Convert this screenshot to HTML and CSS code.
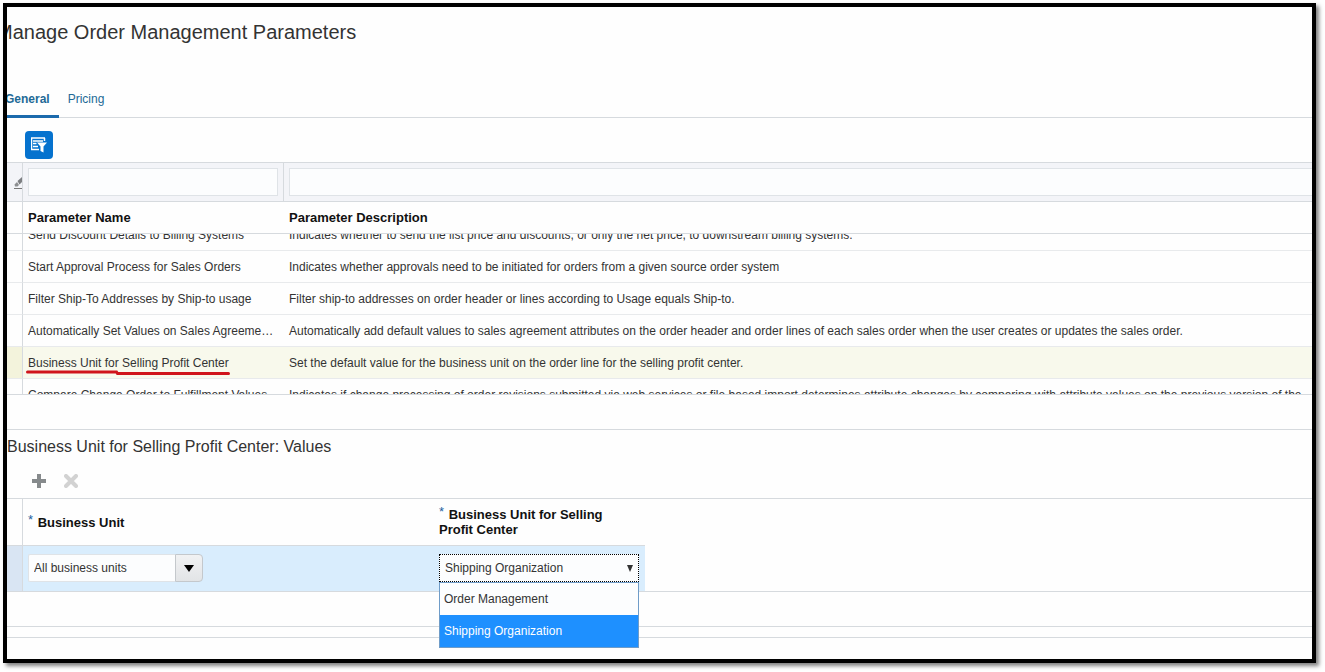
FILE: index.html
```html
<!DOCTYPE html>
<html lang="en">
<head>
    <meta charset="UTF-8">
    <meta name="viewport" content="width=device-width, initial-scale=1.0">
    <title>Manage Order Management Parameters</title>
    <link rel="stylesheet" href="styles.css">
</head>
<body>
    <main class="frame">
        <h1 class="page-title">Manage Order Management Parameters</h1>

        <nav class="tabs">
            <a href="#general" class="tab active">General</a>
            <a href="#pricing" class="tab">Pricing</a>
        </nav>

        <section id="general">
            <div class="toolbar">
                <button type="button" class="filter-btn" aria-label="Query by example">
                    <svg width="16" height="16" viewBox="0 0 16 16">
                        <path d="M0 1h14M0.500 1v12M13.500 1v3M0 12.500h8" fill="none" stroke="#fff" stroke-width="1.500"/>
                        <path d="M2 4h10M2 6.500h3.500M2 9.500h5" stroke="#fff" stroke-width="1.500"/>
                        <path d="M6 5.500h10L12.500 9.500v6L9.500 14V9.500z" fill="#fff"/>
                    </svg>
                </button>
            </div>

            <table class="grid params-head">
                <colgroup><col class="col-gutter"><col class="col-name"><col></colgroup>
                <thead>
                    <tr class="filter-row">
                        <td class="gutter">
                            <svg class="eraser" width="9" height="13" viewBox="0 0 9 13">
                                <path d="M1 12.500h8" stroke="#777"/>
                                <path d="M4.500 5L9 1v5L6.500 8.500z" fill="#7d7f82"/>
                                <path d="M4 6l2 3-1.500 1.500H2L1.500 8.500z" fill="#8d8f92"/>
                            </svg>
                        </td>
                        <td class="divided"><input type="text" class="filter-input" aria-label="Parameter Name"></td>
                        <td class="wide"><input type="text" class="filter-input" aria-label="Parameter Description"></td>
                    </tr>
                    <tr class="head-row">
                        <td class="gutter"></td>
                        <th>Parameter Name</th>
                        <th>Parameter Description</th>
                    </tr>
                </thead>
            </table>

            <div class="params-scroll">
                <table class="grid params-body">
                    <colgroup><col class="col-gutter"><col class="col-name"><col></colgroup>
                    <tbody>
                        <tr>
                            <td class="gutter"></td>
                            <td>Send Discount Details to Billing Systems</td>
                            <td>Indicates whether to send the list price and discounts, or only the net price, to downstream billing systems.</td>
                        </tr>
                        <tr>
                            <td class="gutter"></td>
                            <td>Start Approval Process for Sales Orders</td>
                            <td>Indicates whether approvals need to be initiated for orders from a given source order system</td>
                        </tr>
                        <tr>
                            <td class="gutter"></td>
                            <td>Filter Ship-To Addresses by Ship-to usage</td>
                            <td>Filter ship-to addresses on order header or lines according to Usage equals Ship-to.</td>
                        </tr>
                        <tr>
                            <td class="gutter"></td>
                            <td>Automatically Set Values on Sales Agreement Orders</td>
                            <td>Automatically add default values to sales agreement attributes on the order header and order lines of each sales order when the user creates or updates the sales order.</td>
                        </tr>
                        <tr class="selected">
                            <td class="gutter"></td>
                            <td class="marked">Business Unit for Selling Profit Center
                                <svg class="underline" width="208" height="6" viewBox="0 0 208 6">
                                    <path d="M3.500 2h89l1 1.500h111" fill="none" stroke="#d0141c" stroke-width="3" stroke-linecap="round"/>
                                </svg>
                            </td>
                            <td>Set the default value for the business unit on the order line for the selling profit center.</td>
                        </tr>
                        <tr>
                            <td class="gutter"></td>
                            <td>Compare Change Order to Fulfillment Values</td>
                            <td class="clip">Indicates if change processing of order revisions submitted via web services or file based import determines attribute changes by comparing with attribute values on the previous version of the</td>
                        </tr>
                    </tbody>
                </table>
            </div>
        </section>

        <section class="values">
            <h2 class="values-title">Business Unit for Selling Profit Center: Values</h2>
            <div class="values-toolbar">
                <button type="button" class="icon-btn" aria-label="Add row">
                    <svg width="14" height="14" viewBox="0 0 14 14"><path d="M7 0v14M0 7h14" stroke="#868a8c" stroke-width="4"/></svg>
                </button>
                <button type="button" class="icon-btn" aria-label="Delete row" disabled>
                    <svg width="14" height="14" viewBox="0 0 14 14"><path d="M2 2l10 10M12 2L2 12" stroke="#d2d2d2" stroke-width="4" stroke-linecap="round"/></svg>
                </button>
            </div>

            <div class="values-grid">
                <table class="grid values-table">
                    <colgroup><col class="col-gutter"><col class="col-unit"><col></colgroup>
                    <thead>
                        <tr>
                            <td class="gutter"></td>
                            <th><span class="req">*</span> Business Unit</th>
                            <th><span class="req">*</span> Business Unit for Selling<br>Profit Center</th>
                        </tr>
                    </thead>
                    <tbody>
                        <tr>
                            <td class="gutter"></td>
                            <td>
                                <div class="combo">
                                    <input type="text" class="combo-input" value="All business units" aria-label="Business Unit">
                                    <button type="button" class="combo-btn" aria-label="Show business units">
                                        <svg width="10" height="7" viewBox="0 0 10 7"><path d="M0 0h10L5 7z"/></svg>
                                    </button>
                                </div>
                            </td>
                            <td>
                                <div class="picker">
                                    <select class="picker-select" aria-label="Business Unit for Selling Profit Center">
                                        <option>Order Management</option>
                                        <option selected>Shipping Organization</option>
                                    </select>
                                    <svg class="picker-arrow" width="6" height="7" viewBox="0 0 6 7"><path d="M0 0h6L3 7z" fill="#333"/></svg>
                                    <ul class="picker-list" role="listbox">
                                        <li role="option">Order Management</li>
                                        <li role="option" aria-selected="true" class="current">Shipping Organization</li>
                                    </ul>
                                </div>
                            </td>
                        </tr>
                    </tbody>
                </table>
            </div>
            <div class="values-footer"></div>
            <div class="values-end"></div>
        </section>
    </main>
</body>
</html>
```
FILE: styles.css
```css
:root {
    --text: #333;
    --line: #d6dade;
    --row-line: #e8eaec;
    --link: #236a96;
    --accent: #0572ce;
}

* {
    box-sizing: border-box;
}

body {
    margin: 0;
    padding: 3px 9px 9px 3px;
    background: #fff;
    color: var(--text);
    font: 12px/16px "Liberation Sans", Arial, sans-serif;
}

.frame {
    min-height: calc(100vh - 12px);
    border: 4px solid #000;
    background: #fefefe;
    box-shadow: 3px 3px 4px rgba(0, 0, 0, 0.5);
    overflow: hidden;
}

input,
select,
button {
    font: inherit;
    color: inherit;
    margin: 0;
}

/* heading and tabs */

.page-title {
    margin: 0 0 0 -11px;
    padding: 13px 0 47px;
    font-size: 20px;
    line-height: 24px;
    font-weight: normal;
    white-space: nowrap;
}

.tabs {
    display: flex;
    height: 27px;
    margin-left: -12px;
    border-bottom: 1px solid var(--line);
}

.tab {
    height: 27px;
    padding: 0 9px;
    color: var(--link);
    text-decoration: none;
}

.tab.active {
    padding-left: 10px;
    border-bottom: 3px solid #1b6aac;
    font-weight: bold;
}

/* parameters */

.toolbar {
    padding: 13px 18px 3px;
}

.filter-btn {
    display: flex;
    align-items: center;
    justify-content: center;
    width: 28px;
    height: 28px;
    padding: 0;
    border: 0;
    border-radius: 4px;
    background: var(--accent);
}

.grid {
    width: 100%;
    table-layout: fixed;
    border-collapse: separate;
    border-spacing: 0;
}

.grid td,
.grid th {
    padding: 0 5px;
    text-align: left;
}

.grid .gutter {
    padding: 0;
    border-right: 1px solid var(--line);
}

.col-gutter {
    width: 16px;
}

.col-name {
    width: 261px;
}

.params-head {
    border-top: 1px solid var(--line);
}

.params-head td,
.params-head th {
    border-bottom: 1px solid var(--line);
}

.filter-row td {
    height: 39px;
    background: #f3f4f8;
}

.filter-row .divided {
    border-right: 1px solid var(--line);
}

.filter-row .wide {
    padding-right: 0;
}

.eraser {
    display: block;
    margin-left: auto;
}

.filter-input {
    display: block;
    width: 100%;
    height: 28px;
    padding: 0 5px;
    border: 1px solid #dfe3e7;
    background: #fcfdfe;
}

.wide .filter-input {
    border-right: 0;
}

.head-row th,
.head-row td {
    height: 32px;
}

.grid th {
    color: #111;
    font-size: 13px;
    line-height: 15px;
}

.params-scroll {
    height: 161px;
    border-bottom: 1px solid var(--line);
    overflow: hidden;
}

/* list is scrolled part way down */
.params-body {
    margin-top: -15px;
}

.params-body td {
    height: 32px;
    border-bottom: 1px solid var(--row-line);
    overflow: hidden;
    text-overflow: ellipsis;
    white-space: nowrap;
}

.params-body .clip {
    text-overflow: clip;
}

.params-body .selected td {
    background: #f8f9ec;
}

.params-body .selected .gutter {
    background: #f3f3dc;
}

.marked {
    position: relative;
}

.underline {
    position: absolute;
    left: 1px;
    bottom: 2px;
}

/* values */

.values {
    margin-top: 34px;
    border-top: 1px solid var(--line);
}

.values-title {
    margin: 0;
    padding: 8px 0;
    font-size: 16px;
    line-height: 18px;
    font-weight: normal;
}

.values-toolbar {
    display: flex;
    gap: 18px;
    padding: 10px 25px;
}

.icon-btn {
    display: flex;
    padding: 0;
    border: 0;
    background: none;
}

.values-grid {
    border-top: 1px solid var(--line);
    border-bottom: 1px solid var(--line);
}

.values-table {
    width: 638px;
}

.col-unit {
    width: 411px;
}

.values-table th,
.values-table thead td {
    height: 47px;
    border-bottom: 1px solid var(--line);
}

.req {
    margin-right: 1px;
    color: #1b5f9e;
    font-weight: normal;
    line-height: 0;
    vertical-align: 3px;
}

.values-table tbody td {
    height: 45px;
    padding-bottom: 2px;
    background: #d9edfd;
}

.values-table tbody .gutter {
    background: #d9e5f3;
}

.combo {
    display: flex;
    width: 175px;
    height: 28px;
}

.combo-input {
    flex: 1;
    min-width: 0;
    padding: 0 5px;
    border: 1px solid #dfe3e7;
    border-right: 0;
    border-radius: 2px 0 0 2px;
    background: #fcfdfe;
}

.combo-btn {
    display: flex;
    align-items: center;
    justify-content: center;
    width: 28px;
    padding: 2px 0 0;
    border: 1px solid #c4c8cc;
    border-radius: 0 4px 4px 0;
    background: linear-gradient(#f1f2f3, #e2e4e6);
}

.picker {
    position: relative;
    width: 200px;
}

.picker-select {
    display: block;
    width: 100%;
    height: 28px;
    padding: 0 5px;
    border: 1px dotted #000;
    border-radius: 0;
    background: #fcfdfe;
    appearance: none;
}

.picker-arrow {
    position: absolute;
    top: 11px;
    right: 6px;
}

.picker-list {
    position: absolute;
    top: 100%;
    left: 0;
    width: 100%;
    margin: 0;
    padding: 0;
    border: 1px solid #6f9cc8;
    background: #fcfdfe;
    list-style: none;
}

.picker-list li {
    padding: 8px 4px;
}

.picker-list .current {
    background: #1e90ff;
    color: #fff;
}

.values-footer {
    height: 35px;
    border-bottom: 1px solid var(--line);
}

.values-end {
    height: 11px;
    border-bottom: 1px solid var(--line);
}
```
